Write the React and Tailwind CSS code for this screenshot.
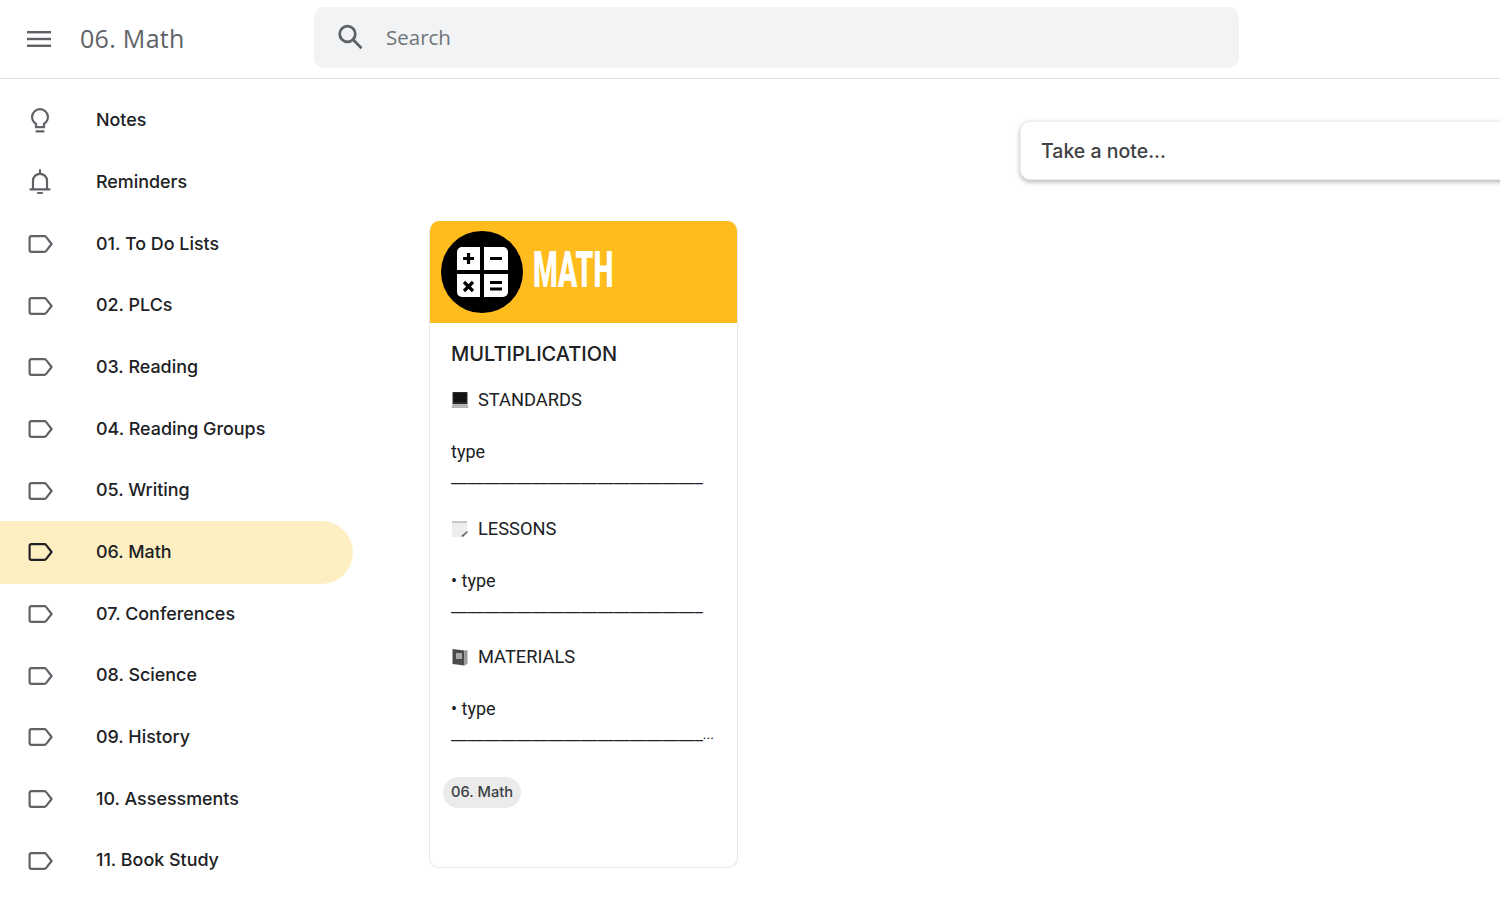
const LABELS = ["01. To Do Lists","02. PLCs","03. Reading","04. Reading Groups","05. Writing","06. Math","07. Conferences","08. Science","09. History","10. Assessments","11. Book Study"];

function Bulb() {
  return (
    <svg width="24" height="28" viewBox="0 0 24 28" fill="none" stroke="#5f6368" strokeWidth="2.2" className="shrink-0 -translate-x-[1px]">
      <path d="M12 2.200c-4.400 0-7.900 3.500-7.900 7.800 0 3.100 1.600 5.400 3.900 6.800v3.400h8v-3.400c2.300-1.400 3.900-3.700 3.900-6.800 0-4.300-3.500-7.800-7.900-7.800z" />
      <path d="M8.500 24.400h7" strokeLinecap="round" />
    </svg>
  );
}
function Bell() {
  return (
    <svg width="24" height="28" viewBox="0 0 24 28" fill="none" stroke="#5f6368" strokeWidth="2.2" className="shrink-0 -translate-x-[1px]">
      <path d="M2.500 21.400h19" strokeLinecap="round" />
      <path d="M5 21.200v-8.400c0-4 3-6.900 7-6.900s7 2.900 7 6.900v8.400" />
      <path d="M12 2v3" strokeLinecap="round" />
      <path d="M10 25h4" strokeLinecap="round" />
    </svg>
  );
}
function Tag({ active }) {
  return (
    <svg width="26" height="20" viewBox="0 0 26 20" fill="none" stroke={active ? "#202124" : "#5f6368"} strokeWidth="2.2" className="shrink-0">
      <path d="M3.400 2.200h13.200c.6 0 1.100.3 1.400.7l5.600 7.100-5.600 7.100c-.3.4-.8.7-1.400.7H3.400c-1 0-1.800-.8-1.800-1.800V4c0-1 .8-1.800 1.800-1.800z" strokeLinejoin="round" />
    </svg>
  );
}
function NavRow({ icon, label, active }) {
  return (
    <div className={`flex items-center w-[353px] rounded-r-full pl-7 ${active ? "h-[63px] -my-[0.67px] bg-[#feefc3]" : "h-[61.67px]"}`}>
      <div className="w-[24px] flex justify-center translate-x-[1px]">{icon}</div>
      <span className="ml-[44px] text-[17.900px] font-medium text-[#202124]">{label}</span>
    </div>
  );
}
function CalcLogo() {
  return (
    <svg width="84" height="84" viewBox="0 0 84 84" className="shrink-0">
      <circle cx="42" cy="42" r="41" fill="#000" />
      <path d="M22 17h18v23H17V22a5 5 0 0 1 5-5z" fill="#fff" />
      <path d="M44 17h19a5 5 0 0 1 5 5v18H44z" fill="#fff" />
      <path d="M17 44h23v23H22a5 5 0 0 1-5-5z" fill="#fff" />
      <path d="M44 44h24v18a5 5 0 0 1-5 5H44z" fill="#fff" />
      <path d="M28.500 23v11M23 28.500h11M50 28.500h12M24 52l9 9M33 52l-9 9M50 52.500h12M50 59h12" stroke="#000" strokeWidth="3.200" />
    </svg>
  );
}
function Laptop() {
  return (
    <svg width="18" height="18" viewBox="0 0 18 18" className="shrink-0">
      <rect x="1.500" y="1" width="15" height="12" fill="#2a2a2c" />
      <rect x="2.500" y="2" width="13" height="9" fill="#141416" />
      <path d="M1.500 13h15l1 4H.5z" fill="#b5b5b5" />
    </svg>
  );
}
function Pad() {
  return (
    <svg width="18" height="18" viewBox="0 0 18 18" className="shrink-0">
      <path d="M1 2h15v11l-4 4H1z" fill="#ededed" />
      <path d="M1 1h15v2H1z" fill="#c7c7c7" />
      <path d="M10 16l6-5 1 1-5 5z" fill="#6b6b6b" />
    </svg>
  );
}
function Book() {
  return (
    <svg width="18" height="18" viewBox="0 0 18 18" className="shrink-0">
      <path d="M1.500 1l12 1.500v15l-12-1.500z" fill="#4b4b4b" />
      <path d="M13.500 2.500l3-.5v14l-3 1.500z" fill="#9a9a9a" />
      <rect x="5" y="5" width="6" height="6" fill="#a8a8a8" />
    </svg>
  );
}
const LINE = "_".repeat(31);

function Section({ icon, title, body, tail }) {
  return (
    <>
      <div className="flex items-center h-[24px]">
        <div className="w-[27px] flex">{icon}</div>
        <span className="font-['Roboto',sans-serif] text-[18.300px] text-[#202124]">{title}</span>
      </div>
      <p className="mt-[28px] h-[24px] leading-[24px] font-['Roboto',sans-serif] text-[18px] text-[#202124]">{body}</p>
      <div className="mt-[1px] h-[24px] leading-[24px] flex font-['Roboto',sans-serif] text-[18px] text-[#202124] whitespace-nowrap">
        <span>{LINE}</span>
        {tail && <span className="text-[14px]">...</span>}
      </div>
    </>
  );
}

export default function App() {
  return (
    <div className="w-[1500px] h-[900px] overflow-hidden bg-white font-['Inter',sans-serif]">
      <header className="h-[79px] border-b border-[#dfe0e1] flex items-center">
        <svg width="24" height="18" viewBox="0 0 24 18" className="ml-[27px] shrink-0" fill="#5f6368">
          <rect x="0" y="1" width="24" height="2.400" />
          <rect x="0" y="7.800" width="24" height="2.400" />
          <rect x="0" y="14.600" width="24" height="2.400" />
        </svg>
        <span className="ml-[29px] w-[234px] text-[25px] text-[#5f6368] font-['Open_Sans',sans-serif] tracking-[0.3px]">06. Math</span>
        <div className="w-[925px] h-[61px] -mt-[4px] rounded-[10px] bg-[#f1f3f4] flex items-center">
          <svg width="28" height="28" viewBox="0 0 28 28" fill="none" stroke="#5f6368" strokeWidth="2.800" className="ml-[22px] shrink-0">
            <circle cx="11.500" cy="11" r="7.800" />
            <path d="M17.500 17l8 8.200" />
          </svg>
          <span className="ml-[22px] text-[20.500px] text-[#6f7377] font-['Open_Sans',sans-serif]">Search</span>
        </div>
      </header>
      <div className="flex">
        <nav className="w-[353px] shrink-0 pt-[11px]">
          <NavRow icon={<Bulb />} label="Notes" />
          <NavRow icon={<Bell />} label="Reminders" />
          {LABELS.map((l) => (
            <NavRow key={l} icon={<Tag active={l === "06. Math"} />} label={l} active={l === "06. Math"} />
          ))}
        </nav>
        <main className="flex-1 min-w-0 relative">
          <div className="ml-[667px] mt-[42px] w-[620px] h-[59px] rounded-[10px] bg-white border border-[#eeeeee] shadow-[0_2px_5px_rgba(60,64,67,0.4)] flex items-center pl-[20px] pt-[2px] text-[19.500px] font-medium text-[#3f4144] font-['Inter',sans-serif]">
            Take a note...
          </div>
          <article className="ml-[76px] mt-[41px] w-[309px] h-[647px] rounded-[10px] border-x border-b border-[#e6e7e8] overflow-hidden">
            <div className="h-[102px] -mx-[1px] bg-[#febd1c] flex items-center pl-[11px]">
              <CalcLogo />
              <span className="ml-[9px] -mt-[5px] w-[80px] inline-block origin-left scale-x-[0.565] text-[50px] leading-none font-black text-white font-['Roboto',sans-serif] whitespace-nowrap">MATH</span>
            </div>
            <div className="pl-[21px] pt-[17px]">
              <h2 className="text-[20px] leading-[28px] font-medium text-[#202124] font-['Inter',sans-serif]">MULTIPLICATION</h2>
              <div className="mt-[20px]">
                <Section icon={<Laptop />} title="STANDARDS" body="type" />
                <div className="mt-[27.500px]">
                  <Section icon={<Pad />} title="LESSONS" body="• type" />
                </div>
                <div className="mt-[27.500px]">
                  <Section icon={<Book />} title="MATERIALS" body="• type" tail />
                </div>
              </div>
              <div className="-ml-[8px] mt-[31px] inline-flex items-center h-[31px] pl-[8px] pr-[8px] rounded-full bg-[#ebebeb] text-[14.700px] font-medium text-[#3c4043] font-['Inter',sans-serif]">
                06. Math
              </div>
            </div>
          </article>
        </main>
      </div>
    </div>
  );
}
